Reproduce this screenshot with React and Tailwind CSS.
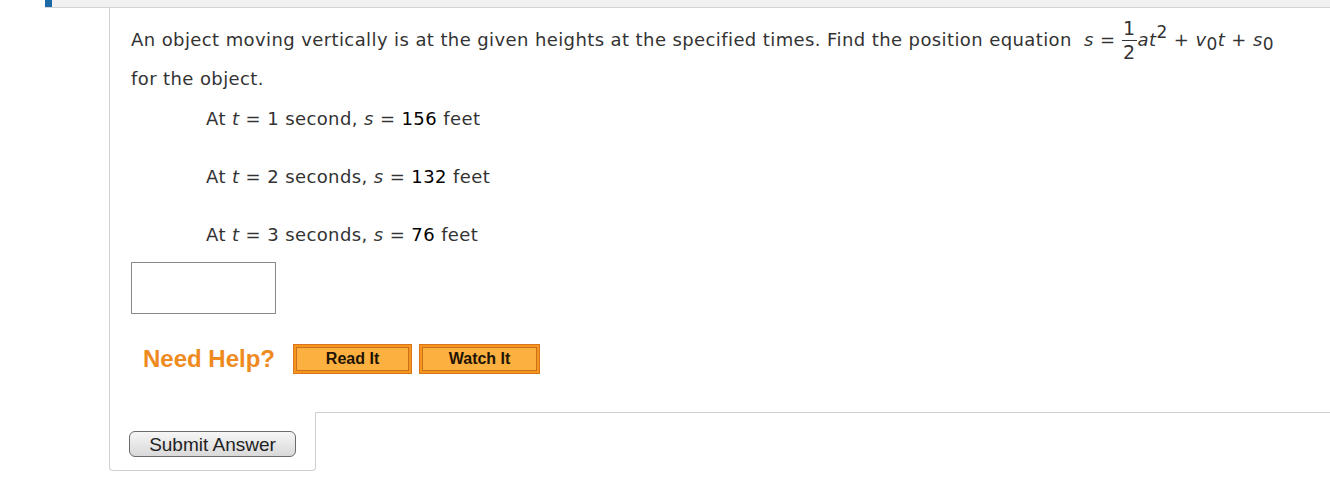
export default function App() {
  const verdana = { fontFamily: '"DejaVu Sans", Verdana, sans-serif' };
  const arial = { fontFamily: '"Liberation Sans", Arial, sans-serif' };
  return (
    <div className="w-[1330px] h-[483px] bg-white overflow-hidden">
      {/* top strip */}
      <div className="ml-[45px] h-[8px] bg-[#f1f1f1] border-b border-[#d4d4d4] flex">
        <div className="w-[7px] h-[7px] bg-[#1b6aa5]" />
      </div>

      <div className="ml-[109px] w-[1221px]">
        <div className="border-l border-b border-[#cfcfcf] pl-[21px] pt-[12px] pb-[38px] text-[#333] text-[18px] tracking-[0.4px]" style={verdana}>
          <p className="leading-[39px]">
            An object moving vertically is at the given heights at the specified times. Find the position equation&nbsp;{' '}
            <span className="italic">s</span> ={' '}
            <span className="inline-flex flex-col items-center justify-center h-[18px] align-middle leading-none text-[19px] tracking-normal -translate-y-[1px] mr-[1px]">
              <span className="pb-[2px]">1</span>
              <span className="border-t border-[#333] w-[15px] pt-[2px] text-center">2</span>
            </span>
            <span className="italic">at</span><sup className="text-[17px]">2</sup> + <span className="italic">v</span><sub className="text-[17px]">0</sub><span className="italic">t</span> + <span className="italic">s</span><sub className="text-[17px]">0</sub>
            <br />
            for the object.
          </p>

          <div className="pl-[75px] mt-[9px] flex flex-col gap-[35px] leading-[23px]">
            <p>At <span className="italic">t</span> = 1 second, <span className="italic">s</span> = <span className="text-black">156</span> feet</p>
            <p>At <span className="italic">t</span> = 2 seconds, <span className="italic">s</span> = <span className="text-black">132</span> feet</p>
            <p>At <span className="italic">t</span> = 3 seconds, <span className="italic">s</span> = <span className="text-black">76</span> feet</p>
          </div>

          <div className="mt-[16px] w-[145px] h-[52px] border border-[#8a8a8a] bg-white" />

          <div className="mt-[30px] ml-[12px] h-[30px] flex items-center tracking-normal" style={arial}>
            <span className="text-[24px] leading-none font-bold text-[#ee8a1e] mr-[18px]">Need Help?</span>
            <button className="w-[119px] h-[30px] bg-[#f7941d] border border-[#d8761b] p-[2px] mr-[7px]">
              <span className="flex items-center justify-center w-full h-full bg-[#fbb040] border border-[#c8701a] text-[16px] font-bold text-[#221405]">Read It</span>
            </button>
            <button className="w-[121px] h-[30px] bg-[#f7941d] border border-[#d8761b] p-[2px]">
              <span className="flex items-center justify-center w-full h-full bg-[#fbb040] border border-[#c8701a] text-[16px] font-bold text-[#221405]">Watch It</span>
            </button>
          </div>
        </div>

        <div className="w-[207px] h-[59px] -mt-px border-l border-r border-b border-t border-t-white border-[#cfcfcf] rounded-b-[4px] bg-white flex pl-[19px] pt-[18px]">
          <button className="w-[167px] h-[26px] rounded-[6px] border border-[#6b6b6b] bg-gradient-to-b from-[#f6f6f6] to-[#d9d9d9] text-[19px] leading-none text-[#222]" style={arial}>
            Submit Answer
          </button>
        </div>
      </div>
    </div>
  );
}
